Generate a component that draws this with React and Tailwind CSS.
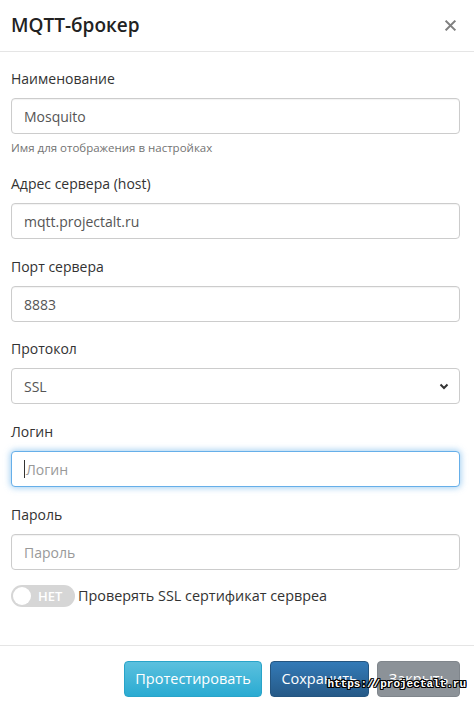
import React from "react";

function Field({ label, children, className = "" }) {
  return (
    <div className={"flex flex-col " + className}>
      <label className="h-5 leading-5 text-[14px] text-[#333] mb-[9px]">{label}</label>
      {children}
    </div>
  );
}

function TextInput({ value, placeholder, focused }) {
  return (
    <div
      className={
        "h-[36px] w-full rounded-[4px] border bg-white px-[12px] flex items-center text-[14px] " +
        (focused
          ? "border-[#66afe9] shadow-[0_0_6px_1px_rgba(102,175,233,0.6)]"
          : "border-[#ccc] shadow-[inset_0_1px_1px_rgba(0,0,0,0.05)]")
      }
    >
      {focused && <span className="w-px h-[18px] bg-[#333] mr-[1px]" />}
      {value ? (
        <span className="text-[#555]">{value}</span>
      ) : (
        <span className="text-[#999]">{placeholder}</span>
      )}
    </div>
  );
}

export default function App() {
  return (
    <div
      className="relative w-[474px] h-[707px] bg-white overflow-hidden text-[#333]"
      style={{ fontFamily: '"Open Sans", "Noto Sans", sans-serif' }}
    >
      {/* header */}
      <div className="h-[52px] border-b border-[#e5e5e5] flex items-center justify-between pl-[11px] pr-[16px]">
        <h4 className="text-[19px] font-semibold text-[#222] leading-none">MQTT-брокер</h4>
        <svg width="11" height="11" viewBox="0 0 12 12" className="mr-[2px]">
          <path d="M1.5 1.5 L10.5 10.5 M10.5 1.5 L1.5 10.5" stroke="#808080" strokeWidth="2.2" strokeLinecap="square" />
        </svg>
      </div>

      {/* body */}
      <div className="pl-[11px] pr-[14px] pt-[17px] flex flex-col">
        <Field label="Наименование">
          <TextInput value="Mosquito" />
          <div className="text-[11.5px] text-[#737373] mt-[5px] leading-[17px]">Имя для отображения в настройках</div>
        </Field>

        <Field label="Адрес сервера (host)" className="mt-[18px]">
          <TextInput value="mqtt.projectalt.ru" />
        </Field>

        <Field label="Порт сервера" className="mt-[18px]">
          <TextInput value="8883" />
        </Field>

        <Field label="Протокол" className="mt-[17px]">
          <div className="h-[36px] w-full rounded-[4px] border border-[#ccc] bg-white pl-[12px] pr-[10px] flex items-center justify-between text-[14px] text-[#555]">
            <span>SSL</span>
            <svg width="10" height="7" viewBox="0 0 10 7">
              <path d="M1.5 1.5 L5 5 L8.5 1.5" fill="none" stroke="#333" strokeWidth="2" />
            </svg>
          </div>
        </Field>

        <Field label="Логин" className="mt-[18px]">
          <TextInput placeholder="Логин" focused />
        </Field>

        <Field label="Пароль" className="mt-[18px]">
          <TextInput placeholder="Пароль" />
        </Field>

        <div className="mt-[15px] flex items-center h-[22px]">
          <div className="w-[64px] h-[22px] rounded-full bg-[#d6d6d6] flex items-center pl-[2px]">
            <div className="w-[18px] h-[18px] rounded-full bg-white" />
            <span className="ml-[7px] text-[13px] font-semibold text-white leading-none">НЕТ</span>
          </div>
          <span className="ml-[3px] text-[14.4px] text-[#333]">Проверять SSL сертификат сервреа</span>
        </div>
      </div>

      {/* footer */}
      <div className="absolute left-0 right-0 top-[645px] border-t border-[#e5e5e5] flex justify-end gap-[8px] pr-[14px] pt-[15px]">
        <button className="h-[36px] w-[138px] rounded-[4px] border border-[#28a4c9] bg-[linear-gradient(#5bc0de,#2aabd2)] text-white text-[14.5px]">
          Протестировать
        </button>
        <button className="h-[36px] w-[99px] rounded-[4px] border border-[#245580] bg-[linear-gradient(#337ab7,#265a88)] text-white text-[14.5px]">
          Сохранить
        </button>
        <button className="h-[36px] w-[83px] rounded-[4px] border border-[#80868c] bg-[#8c9298] text-white text-[14.5px]">
          Закрыть
        </button>
      </div>

      {/* watermark */}
      <div
        className="absolute right-[8px] top-[679px] text-[11px] font-bold text-white leading-none"
        style={{
          fontFamily: '"Liberation Mono", "DejaVu Sans Mono", monospace',
          textShadow:
            "1px 0 0 #000, -1px 0 0 #000, 0 1px 0 #000, 0 -1px 0 #000, 1px 1px 0 #000, -1px -1px 0 #000, 1px -1px 0 #000, -1px 1px 0 #000",
        }}
      >
        https://projectalt.ru
      </div>
    </div>
  );
}
